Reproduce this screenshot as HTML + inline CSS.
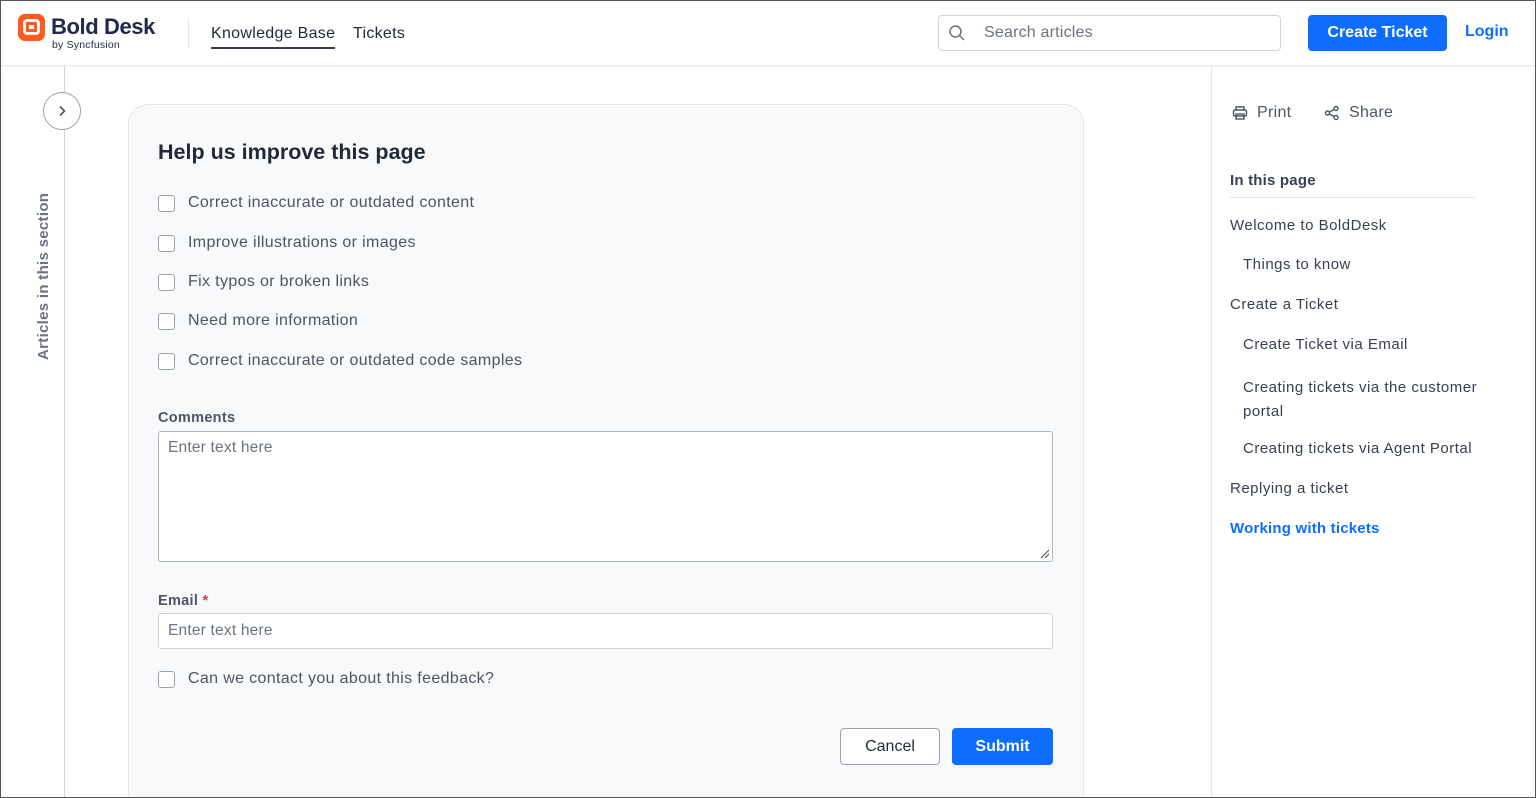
<!DOCTYPE html>
<html style="width:1536px;height:798px;overflow:hidden"><head><meta charset="utf-8"><style>
*{box-sizing:border-box;margin:0;padding:0}
body{width:1536px;height:798px;overflow:hidden;font-family:"Liberation Sans",sans-serif;background:#fff;position:relative;color:#374151}
.frame{position:absolute;left:0;top:0;width:1536px;height:798px;border:1px solid #555;pointer-events:none;z-index:10}
.hdr{position:absolute;left:0;top:0;width:1536px;height:66px;border-bottom:1px solid #e5e7eb;box-shadow:0 1px 3px rgba(0,0,0,.05);background:#fff}
.abs{position:absolute}
.nav{font-size:16px;color:#1f2937;top:25px;letter-spacing:0.3px}
.btn{position:absolute;background:#0d6efd;color:#fff;font-weight:bold;border-radius:4px;display:flex;align-items:center;justify-content:center}
.lbl{font-size:16px;letter-spacing:0.35px;color:#4b5563;position:absolute;left:188px;margin-top:-1px}
.cb{position:absolute;left:158px;width:17px;height:17px;border:1px solid #9ca3af;border-radius:3px;background:#fff}
.toc{position:absolute;font-size:15px;letter-spacing:0.5px;color:#374151}
</style></head><body>
<div class="frame"></div>
<div class="hdr">
  <svg class="abs" style="left:18px;top:14px" width="27" height="27" viewBox="0 0 27 27"><rect x="0" y="0" width="27" height="27" rx="7" fill="#ff5a1f"/><rect x="6.5" y="6.5" width="14" height="13" rx="2.5" fill="none" stroke="#fff" stroke-width="2.8"/><rect x="11" y="11" width="5" height="4" fill="#fff"/></svg>
  <div class="abs" style="left:51px;top:14px;font-size:22px;font-weight:bold;color:#1f2a4a;letter-spacing:-0.4px">Bold Desk</div>
  <div class="abs" style="left:52px;top:39px;font-size:10.5px;color:#1f2a4a;letter-spacing:0.2px">by Syncfusion</div>
  <div class="abs" style="left:188px;top:18px;width:1px;height:30px;background:#e5e7eb"></div>
  <div class="abs nav" style="left:211px">Knowledge Base</div>
  <div class="abs" style="left:211px;top:47px;width:124px;height:2px;background:#374151"></div>
  <div class="abs nav" style="left:353px">Tickets</div>
  <div class="abs" style="left:938px;top:15px;width:343px;height:36px;border:1px solid #d1d5db;border-radius:4px"></div>
  <svg class="abs" style="left:948px;top:24px" width="18" height="18" viewBox="0 0 18 18" fill="none" stroke="#6b7280" stroke-width="1.5"><circle cx="7.5" cy="7.5" r="5.5"/><path d="M11.5 11.5L16 16"/></svg>
  <div class="abs" style="left:984px;top:24px;font-size:16px;color:#6b7280;letter-spacing:0.2px">Search articles</div>
  <div class="btn" style="left:1308px;top:15px;width:139px;height:36px;font-size:16px">Create Ticket</div>
  <div class="abs" style="left:1465px;top:23px;font-size:16px;font-weight:bold;color:#0d6efd">Login</div>
</div>
<div class="abs" style="left:64px;top:66px;width:1px;height:732px;background:#d1d5db"></div>
<div class="abs" style="left:43px;top:92px;width:38px;height:38px;border:1px solid #9ca3af;border-radius:50%;background:#fff"></div>
<svg class="abs" style="left:55px;top:104px" width="14" height="14" viewBox="0 0 14 14" fill="none" stroke="#4b5563" stroke-width="1.6"><path d="M5 2.5L9.5 7 5 11.5"/></svg>
<div class="abs" style="left:35px;top:360px;transform:rotate(-90deg);transform-origin:0 0;font-size:15px;font-weight:bold;color:#6b7280;white-space:nowrap;letter-spacing:0.3px">Articles in this section</div>
<div class="abs" style="left:128px;top:104px;width:956px;height:720px;background:#f8f9fb;border:1px solid #e5e7eb;border-radius:20px"></div>
<div class="abs" style="left:158px;top:140px;font-size:21.5px;font-weight:bold;color:#1f2937">Help us improve this page</div>
<div class="cb" style="top:195px"></div><div class="lbl" style="top:195px">Correct inaccurate or outdated content</div>
<div class="cb" style="top:235px"></div><div class="lbl" style="top:235px">Improve illustrations or images</div>
<div class="cb" style="top:274px"></div><div class="lbl" style="top:274px">Fix typos or broken links</div>
<div class="cb" style="top:313px"></div><div class="lbl" style="top:313px">Need more information</div>
<div class="cb" style="top:353px"></div><div class="lbl" style="top:353px">Correct inaccurate or outdated code samples</div>
<div class="abs" style="left:158px;top:410px;font-size:14.5px;font-weight:bold;color:#4b5563;letter-spacing:0.3px">Comments</div>
<div class="abs" style="left:158px;top:431px;width:895px;height:131px;border:1px solid #adb5bd;border-radius:3px;background:#fff"></div>
<div class="abs" style="left:168px;top:439px;font-size:15.5px;color:#6b7280;letter-spacing:0.2px">Enter text here</div>
<svg class="abs" style="left:1040px;top:549px" width="10" height="10" viewBox="0 0 10 10" stroke="#555" stroke-width="1.2"><path d="M1 9L9 1M5 9L9 5"/></svg>
<div class="abs" style="left:158px;top:593px;font-size:14.5px;font-weight:bold;color:#4b5563;letter-spacing:0.3px">Email <span style="color:#dc3545">*</span></div>
<div class="abs" style="left:158px;top:613px;width:895px;height:36px;border:1px solid #d1d5db;border-radius:3px;background:#fff"></div>
<div class="abs" style="left:168px;top:622px;font-size:15.5px;color:#6b7280;letter-spacing:0.2px">Enter text here</div>
<div class="cb" style="top:671px"></div><div class="lbl" style="top:671px">Can we contact you about this feedback?</div>
<div class="abs" style="left:840px;top:728px;width:100px;height:37px;border:1px solid #9ca3af;border-radius:4px;background:#fff;display:flex;align-items:center;justify-content:center;font-size:16px;color:#1f2937">Cancel</div>
<div class="btn" style="left:952px;top:728px;width:101px;height:37px;font-size:16px">Submit</div>
<div class="abs" style="left:1211px;top:66px;width:1px;height:732px;background:#e5e7eb"></div>
<svg class="abs" style="left:1232px;top:105px" width="16" height="16" viewBox="0 0 16 16" fill="none" stroke="#4b5563" stroke-width="1.4"><path d="M4 5V2h8v3"/><rect x="1.5" y="5" width="13" height="6" rx="1.5"/><rect x="4" y="9" width="8" height="5"/></svg>
<div class="abs" style="left:1257px;top:104px;font-size:16px;color:#4b5563;letter-spacing:0.3px">Print</div>
<svg class="abs" style="left:1324px;top:105px" width="16" height="16" viewBox="0 0 16 16" fill="none" stroke="#4b5563" stroke-width="1.4"><circle cx="3.5" cy="8" r="2"/><circle cx="12" cy="3.5" r="2"/><circle cx="12" cy="12.5" r="2"/><path d="M5.3 7L10.2 4.5M5.3 9L10.2 11.5"/></svg>
<div class="abs" style="left:1349px;top:104px;font-size:16px;color:#4b5563;letter-spacing:0.3px">Share</div>
<div class="abs" style="left:1230px;top:172px;font-size:15px;font-weight:bold;color:#374151;letter-spacing:0.2px">In this page</div>
<div class="abs" style="left:1230px;top:197px;width:245px;height:1px;background:#e5e7eb"></div>
<div class="toc" style="left:1230px;top:217px">Welcome to BoldDesk</div>
<div class="toc" style="left:1243px;top:256px">Things to know</div>
<div class="toc" style="left:1230px;top:296px">Create a Ticket</div>
<div class="toc" style="left:1243px;top:336px">Create Ticket via Email</div>
<div class="toc" style="left:1243px;top:376px;line-height:24px;width:260px">Creating tickets via the customer portal</div>
<div class="toc" style="left:1243px;top:440px">Creating tickets via Agent Portal</div>
<div class="toc" style="left:1230px;top:480px">Replying a ticket</div>
<div class="toc" style="left:1230px;top:520px;font-weight:bold;color:#0d6efd;letter-spacing:0.2px">Working with tickets</div>
</body></html>
